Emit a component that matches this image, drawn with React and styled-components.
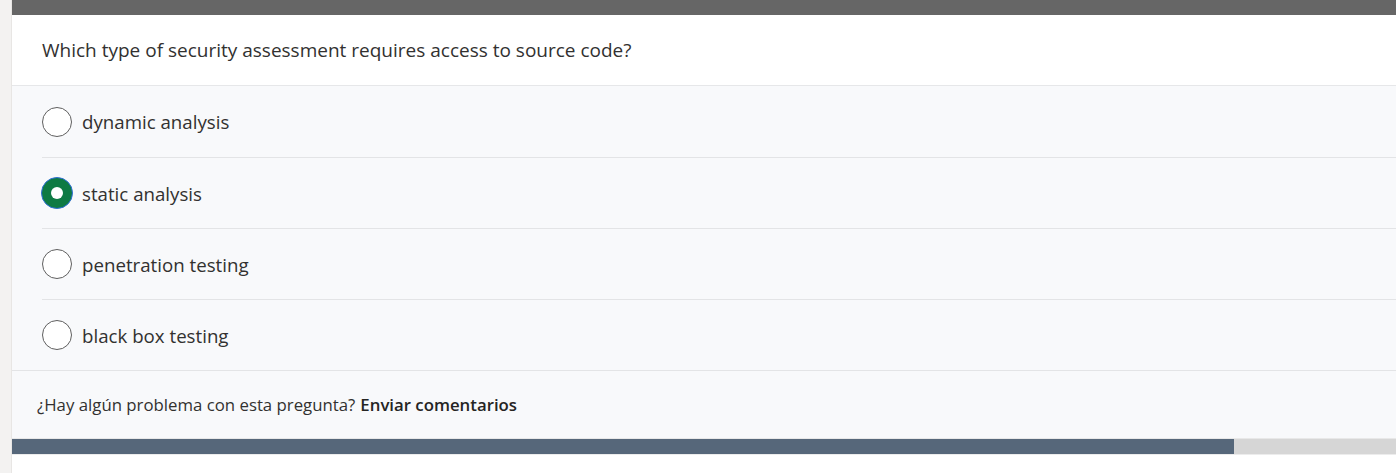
import React, { useState } from "react";
import styled, { createGlobalStyle } from "styled-components";

const GlobalStyle = createGlobalStyle`
  html, body {
    margin: 0;
    padding: 0;
    background: #ffffff;
  }
  body {
    font-family: "Open Sans", "Noto Sans", sans-serif;
    color: #323130;
  }
`;

const options = [
  "dynamic analysis",
  "static analysis",
  "penetration testing",
  "black box testing",
];

const Page = styled.div`
  display: flex;
  height: 473px;
  overflow: hidden;
`;

const SideStrip = styled.div`
  width: 11px;
  flex: none;
  background: #f3f2f1;
  border-right: 1px solid #e8e6e4;
`;

const Main = styled.div`
  flex: 1;
  display: flex;
  flex-direction: column;
  min-width: 0;
`;

const TopBar = styled.div`
  height: 15px;
  background: #666666;
`;

const QuestionHeader = styled.div`
  height: 70px;
  display: flex;
  align-items: center;
  padding: 0 30px;
  font-size: 19px;
  background: #ffffff;
  border-bottom: 1px solid #e6e7e9;
`;

const OptionList = styled.div`
  background: #f8f9fb;
  padding: 0 0 0 30px;
`;

const OptionRow = styled.label`
  height: ${(p) => (p.$first ? "71px" : "70px")};
  display: flex;
  align-items: center;
  gap: 10px;
  font-size: 18.7px;
  cursor: pointer;
  border-top: ${(p) => (p.$first ? "none" : "1px solid #e3e4e6")};
`;

const Radio = styled.span`
  width: ${(p) => (p.$checked ? "32px" : "30px")};
  height: ${(p) => (p.$checked ? "32px" : "30px")};
  margin-left: ${(p) => (p.$checked ? "-1px" : "0")};
  margin-right: ${(p) => (p.$checked ? "-1px" : "0")};
  box-sizing: border-box;
  border-radius: 50%;
  flex: none;
  display: flex;
  align-items: center;
  justify-content: center;
  background: ${(p) => (p.$checked ? "#0e7a43" : "#ffffff")};
  border: ${(p) => (p.$checked ? "1px solid #2f6fd6" : "1.5px solid #5f5f5f")};

  &::after {
    content: "";
    display: ${(p) => (p.$checked ? "block" : "none")};
    width: 12px;
    height: 12px;
    border-radius: 50%;
    background: #ffffff;
  }
`;

const Footer = styled.div`
  height: 67px;
  display: flex;
  align-items: center;
  padding: 0 25px;
  font-size: 16.8px;
  background: #f8f9fb;
  border-top: 1px solid #e3e4e6;
  border-bottom: 1px solid #e8e8e8;

  strong {
    font-weight: 600;
    margin-left: 5px;
    color: #252423;
  }
`;

const Progress = styled.div`
  height: 15px;
  background: #d6d6d6;
  border-bottom: 1px solid #ececec;
`;

const ProgressFill = styled.div`
  height: 100%;
  background: #56677a;
`;

export default function App() {
  const [selected, setSelected] = useState(1);
  const progress = 88.3;

  return (
    <>
      <GlobalStyle />
      <Page>
        <SideStrip />
        <Main>
          <TopBar />
          <QuestionHeader>
            Which type of security assessment requires access to source code?
          </QuestionHeader>
          <OptionList>
            {options.map((opt, i) => (
              <OptionRow key={opt} $first={i === 0} onClick={() => setSelected(i)}>
                <Radio $checked={selected === i} />
                <span>{opt}</span>
              </OptionRow>
            ))}
          </OptionList>
          <Footer>
            ¿Hay algún problema con esta pregunta?<strong>Enviar comentarios</strong>
          </Footer>
          <Progress>
            <ProgressFill style={{ width: `${progress}%` }} />
          </Progress>
        </Main>
      </Page>
    </>
  );
}
